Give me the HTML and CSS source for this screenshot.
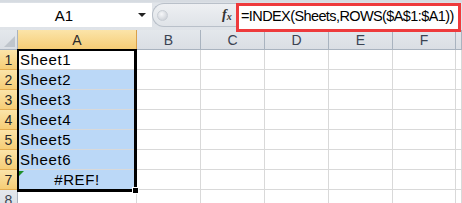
FILE: index.html
```html
<!DOCTYPE html>
<html lang="en">
<head>
    <meta charset="UTF-8">
    <title>INDEX Sheets</title>
    <link rel="stylesheet" href="styles.css">
</head>
<body>
    <!-- Formula bar -->
    <div class="formula-bar">
        <div class="name-box">
            <span class="name-text">A1</span>
            <span class="name-arrow"></span>
        </div>
        <div class="fx-zone">
            <span class="grip"></span>
            <span class="fx">f<sub>x</sub></span>
        </div>
        <div class="formula-box">=INDEX(Sheets,ROWS($A$1:$A1))</div>
    </div>

    <!-- Grid -->
    <div class="sheet">
        <div class="head corner"><span class="corner-tri"></span></div>
        <div class="head col sel">A</div>
        <div class="head col">B</div>
        <div class="head col">C</div>
        <div class="head col">D</div>
        <div class="head col">E</div>
        <div class="head col">F</div>
        <div class="head col"></div>

        <div class="head row sel">1</div>
        <div class="cell">Sheet1</div>
        <div class="cell"></div><div class="cell"></div><div class="cell"></div><div class="cell"></div><div class="cell"></div><div class="cell"></div>

        <div class="head row sel">2</div>
        <div class="cell pick">Sheet2</div>
        <div class="cell"></div><div class="cell"></div><div class="cell"></div><div class="cell"></div><div class="cell"></div><div class="cell"></div>

        <div class="head row sel">3</div>
        <div class="cell pick">Sheet3</div>
        <div class="cell"></div><div class="cell"></div><div class="cell"></div><div class="cell"></div><div class="cell"></div><div class="cell"></div>

        <div class="head row sel">4</div>
        <div class="cell pick">Sheet4</div>
        <div class="cell"></div><div class="cell"></div><div class="cell"></div><div class="cell"></div><div class="cell"></div><div class="cell"></div>

        <div class="head row sel">5</div>
        <div class="cell pick">Sheet5</div>
        <div class="cell"></div><div class="cell"></div><div class="cell"></div><div class="cell"></div><div class="cell"></div><div class="cell"></div>

        <div class="head row sel">6</div>
        <div class="cell pick">Sheet6</div>
        <div class="cell"></div><div class="cell"></div><div class="cell"></div><div class="cell"></div><div class="cell"></div><div class="cell"></div>

        <div class="head row sel">7</div>
        <div class="cell pick center"><span class="err-tri"></span>#REF!</div>
        <div class="cell"></div><div class="cell"></div><div class="cell"></div><div class="cell"></div><div class="cell"></div><div class="cell"></div>

        <div class="head row last">8</div>
        <div class="cell"></div>
        <div class="cell"></div><div class="cell"></div><div class="cell"></div><div class="cell"></div><div class="cell"></div><div class="cell"></div>

        <!-- selection outline A1:A7 -->
        <div class="selection"><span class="handle"></span></div>
    </div>
</body>
</html>
```

FILE: styles.css
```css
* {
    margin: 0;
    padding: 0;
    box-sizing: border-box;
}

body {
    width: 462px;
    height: 203px;
    overflow: hidden;
    background: white;
    font-family: 'Liberation Sans', Arial, sans-serif;
    color: #000;
}

/* Formula bar */
.formula-bar {
    display: flex;
    align-items: flex-start;
    height: 30px;
    padding-top: 3px;
    background: linear-gradient(#d6dbe1 0, #d6dbe1 2px, #e1e5ea 3px, #dfe3e8 100%);
}

.name-box {
    width: 152px;
    height: 24px;
    background: white;
    display: flex;
    align-items: center;
}

.name-text {
    width: 128px;
    text-align: center;
    font-size: 15px;
    padding-top: 1px;
}

.name-arrow {
    width: 0;
    height: 0;
    margin-left: 10px;
    border-left: 4px solid transparent;
    border-right: 4px solid transparent;
    border-top: 4px solid #222;
}

.fx-zone {
    width: 84px;
    height: 24px;
    display: flex;
    align-items: center;
    background: linear-gradient(#eef0f3, #dfe3e8);
    border: 1px solid #b9c0c9;
    border-right: none;
    border-radius: 12px 0 0 12px;
}

.grip {
    width: 11px;
    height: 11px;
    margin-left: 4px;
    border-radius: 50%;
    background: radial-gradient(circle at 40% 35%, #f6f7f9, #c4c9d0);
    border: 1px solid #c9ced5;
}

.fx {
    margin-left: 54px;
    font-family: 'Liberation Serif', 'Times New Roman', serif;
    font-style: italic;
    font-weight: bold;
    font-size: 14px;
    color: #333;
}

.fx sub {
    font-size: 10px;
    vertical-align: -1px;
}

.formula-box {
    position: relative;
    z-index: 3;
    width: 225px;
    height: 29px;
    background: white;
    border: 3px solid #ee3a3c;
    padding: 2px 0 0 2px;
    font-size: 14.5px;
    letter-spacing: -0.6px;
    white-space: nowrap;
}

/* Grid */
.sheet {
    position: relative;
    display: grid;
    grid-template-columns: 18px 119px 64px 64px 64px 64px 63px 6px;
    grid-auto-rows: 20px;
}

.head {
    background: linear-gradient(#e4e8ec, #dadee4);
    border-right: 1px solid #a9b3bf;
    border-bottom: 1px solid #a9b3bf;
    color: #3b4352;
    font-size: 14px;
    display: flex;
    align-items: center;
    justify-content: center;
}

.head.row.last {
    align-items: flex-start;
    padding-top: 2px;
}

.corner {
    position: relative;
}

.corner-tri {
    position: absolute;
    right: 2px;
    bottom: 2px;
    width: 0;
    height: 0;
    border-left: 11px solid transparent;
    border-bottom: 11px solid #bfc5cc;
}

.head.sel {
    background: linear-gradient(#fbe4a9, #f6cd76);
    color: #2b2b2b;
}

.head.col.sel {
    border-bottom-color: #e9a53f;
    border-right-color: #d9a04a;
}

.head.row.sel {
    border-right-color: #e0a444;
    border-bottom-color: #e3ac4f;
}

.cell {
    border-right: 1px solid #d9d9d9;
    border-bottom: 1px solid #d9d9d9;
    font-size: 15px;
    letter-spacing: 0.6px;
    padding-left: 2px;
    display: flex;
    align-items: center;
    white-space: nowrap;
}

.cell.pick {
    background: #bbd8f7;
}

.cell.center {
    position: relative;
    justify-content: center;
    padding-left: 0;
}

.err-tri {
    position: absolute;
    left: 1px;
    top: 1px;
    width: 0;
    height: 0;
    border-top: 5px solid #1f8f2a;
    border-right: 5px solid transparent;
}

.selection {
    position: absolute;
    left: 17px;
    top: 19px;
    width: 120px;
    height: 143px;
    border: 2px solid #000;
    border-right-width: 3px;
    border-bottom-width: 3px;
    z-index: 2;
}

.handle {
    position: absolute;
    right: -5px;
    bottom: -5px;
    width: 7px;
    height: 7px;
    background: #000;
    border: 1px solid white;
}
```
